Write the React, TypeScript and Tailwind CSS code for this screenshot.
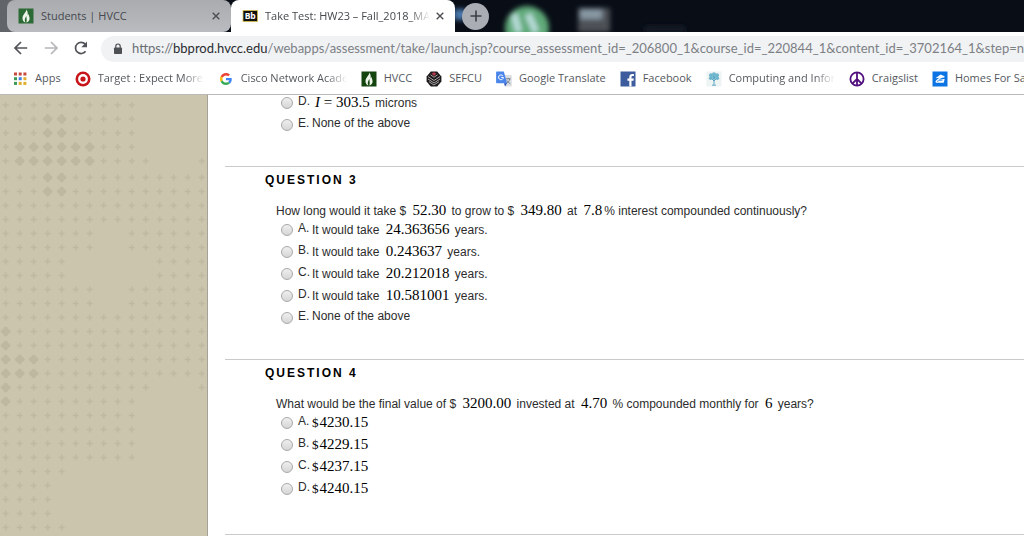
import type { ReactNode } from 'react';

/* ---------- small drawings ---------- */

function FlameIcon({ color = '#1f5c24' }: { color?: string }) {
  return (
    <svg viewBox="0 0 16 16" className="size-4 shrink-0">
      <rect x="0.5" y="0.5" width="15" height="15" fill={color} />
      <path d="M8.4 1.6c.4 2.200-3.900 5-3.900 8.600 0 2.200 1.200 3.700 2.900 4.300-1.300-2.300-.4-4.600 1.100-6.400-.3 2.400.9 3.900-.2 6.500 2-.5 3.300-2.100 3.300-4.100 0-1.700-.9-2.900-1-4.400-.5.400-.8.900-.9 1.500C9.900 5.200 9.600 3 8.400 1.600z" fill="#eef5ea" />
    </svg>
  );
}

function BbIcon() {
  return (
    <svg viewBox="0 0 16 16" className="size-4 shrink-0">
      <rect x="1" y="2.500" width="14.500" height="11" fill="#111" stroke="#d9c04a" strokeWidth="0.800" />
      <text x="8.200" y="11.200" fontSize="8.500" fontWeight="700" textAnchor="middle" fill="#fff" fontFamily="Open Sans, sans-serif">Bb</text>
    </svg>
  );
}

function CloseIcon() {
  return (
    <svg viewBox="0 0 8 8" className="size-2">
      <path d="M.7.7l6.600 6.600M7.300.7L.7 7.300" stroke="#4b4e52" strokeWidth="1.400" />
    </svg>
  );
}

function AppsIcon() {
  const colors = ['#c94a3c', '#c94a3c', '#c94a3c', '#3c9a55', '#3f7fe0', '#e0ae2b', '#3c9a55', '#e0ae2b', '#e0ae2b'];
  return (
    <svg viewBox="0 0 16 16" className="size-4 shrink-0">
      {colors.map((c, i) => (
        <rect key={i} x={2 + (i % 3) * 4.700} y={1.500 + Math.floor(i / 3) * 4.700} width="3" height="3" fill={c} />
      ))}
    </svg>
  );
}

function TargetIcon() {
  return (
    <svg viewBox="0 0 16 16" className="size-4 shrink-0">
      <circle cx="8" cy="8" r="7.500" fill="#c8151b" />
      <circle cx="8" cy="8" r="4.900" fill="#fff" />
      <circle cx="8" cy="8" r="2.600" fill="#c8151b" />
    </svg>
  );
}

function GoogleIcon() {
  return (
    <svg viewBox="0 0 48 48" className="size-4 shrink-0 p-[2px]">
      <path fill="#EA4335" d="M24 9.500c3.540 0 6.710 1.220 9.210 3.600l6.850-6.850C35.900 2.380 30.470 0 24 0 14.620 0 6.510 5.380 2.560 13.220l7.980 6.190C12.430 13.720 17.740 9.500 24 9.500z" />
      <path fill="#4285F4" d="M46.980 24.550c0-1.570-.15-3.090-.38-4.550H24v9.020h12.940c-.58 2.960-2.260 5.480-4.780 7.180l7.730 6c4.510-4.180 7.090-10.360 7.090-17.650z" />
      <path fill="#FBBC05" d="M10.530 28.590c-.48-1.450-.76-2.990-.76-4.590s.27-3.140.76-4.590l-7.980-6.190C.92 16.460 0 20.120 0 24c0 3.880.92 7.540 2.560 10.780l7.970-6.190z" />
      <path fill="#34A853" d="M24 48c6.480 0 11.930-2.130 15.890-5.810l-7.730-6c-2.150 1.450-4.920 2.300-8.160 2.300-6.260 0-11.570-4.220-13.470-9.910l-7.980 6.190C6.510 42.620 14.620 48 24 48z" />
    </svg>
  );
}

function SefcuIcon() {
  return (
    <svg viewBox="0 0 16 16" className="size-4 shrink-0">
      <path d="M4.800.6h6.400l4.200 4.800v5l-4.200 5H4.800l-4.200-5v-5z" fill="#1d1a1c" />
      <path d="M2 5.500l6 4 6-4M2 8l6 4 6-4M3 10.700l5 3.300 5-3.300M4.500 3.800L8 6.300l3.500-2.500" fill="none" stroke="#b9b3b5" strokeWidth="0.900" />
      <path d="M5.500 2.500L8 1.300l2.500 1.200L8 5z" fill="#b03a4a" />
    </svg>
  );
}

function TranslateIcon() {
  return (
    <svg viewBox="0 0 16 16" className="size-4 shrink-0">
      <path d="M6 4h9a.8.8 0 0 1 .8.800v10a.8.800 0 0 1-.8.800H9z" fill="#dcdfe3" />
      <path d="M9.800 7.800h4.800M12.200 6.800v1M13.800 7.800c-.5 2.300-1.900 3.900-3.400 4.800M10.800 9.400c.8 1.500 2 2.500 3.500 3.300" fill="none" stroke="#6d7a88" strokeWidth="0.900" />
      <path d="M.9.4h6.900l3.300 11.900H.9a.8.800 0 0 1-.8-.8V1.200A.8.800 0 0 1 .9.400z" fill="#4b86ea" />
      <path d="M8 12.300h3.100L9 15.500z" fill="#2f55c0" />
      <path d="M6.800 4.700a2.400 2.400 0 1 0 .6 1.700H5.200" fill="none" stroke="#fff" strokeWidth="1" />
    </svg>
  );
}

function FacebookIcon() {
  return (
    <svg viewBox="0 0 16 16" className="size-4 shrink-0">
      <rect x="0.500" y="0.500" width="15" height="15" fill="#3d5c9e" />
      <path d="M9.300 15.500V9.800H7.400V7.600h1.900V6c0-2 1.200-3 3-3 .8 0 1.300.1 1.600.1v2h-1.200c-.9 0-1.200.5-1.200 1.200v1.300h2.300l-.3 2.200h-2v5.700z" fill="#fff" />
    </svg>
  );
}

function TreeIcon() {
  return (
    <svg viewBox="0 0 16 16" className="size-4 shrink-0">
      <rect x="0.500" y="0.500" width="15" height="15" fill="#eef3f4" />
      <g fill="#6fb6cd">
        <circle cx="8" cy="3.200" r="1.900" />
        <circle cx="5" cy="4.300" r="2" />
        <circle cx="11" cy="4.300" r="2" />
        <circle cx="4.600" cy="7.200" r="1.700" />
        <circle cx="11.400" cy="7.200" r="1.700" />
        <circle cx="8" cy="6.500" r="2" />
      </g>
      <path d="M8 5v9M8 10L5.500 7.500M8 10l2.500-2.500M6 14.200h4" fill="none" stroke="#4f9fbb" strokeWidth="0.900" />
    </svg>
  );
}

function PeaceIcon() {
  return (
    <svg viewBox="0 0 16 16" className="size-4 shrink-0">
      <circle cx="8" cy="8" r="6.600" fill="#fff" stroke="#52107f" strokeWidth="1.800" />
      <path d="M8 1.500v13M8 8l-4.600 4.600M8 8l4.600 4.600" stroke="#52107f" strokeWidth="1.800" />
    </svg>
  );
}

function ZillowIcon() {
  return (
    <svg viewBox="0 0 16 16" className="size-4 shrink-0">
      <rect x="0.500" y="0.500" width="15" height="15" fill="#0d74e4" />
      <path d="M3.400 7.200L8.600 3.600l4 1.600-.3 1.300C9.800 6.700 8.200 7.600 6.700 9c2-.8 3.900-1.100 6-1.100l-1 3.800H4l-.6-1.200C4.600 8.700 6 7.600 7.700 6.700 6.200 6.800 4.800 7 3.400 7.200z" fill="#fff" />
      <path d="M5 10.400c1.800-.9 3.500-1.300 5.500-1.200" fill="none" stroke="#0d74e4" strokeWidth="0.800" />
    </svg>
  );
}

/* ---------- browser chrome ---------- */

function FadedText({ children, fade, className = '' }: { children: string; fade?: boolean; className?: string }) {
  return (
    <span
      className={`overflow-hidden whitespace-nowrap ${
        fade ? '[mask-image:linear-gradient(to_right,#000_calc(100%-20px),transparent)]' : ''
      } ${className}`}
    >
      {children}
    </span>
  );
}

function Tab({ icon, title, active }: { icon: ReactNode; title: string; active?: boolean }) {
  return (
    <div
      className={`flex h-8 w-56 shrink-0 items-center rounded-t-lg pr-[7px] pl-[11px] ${
        active ? 'bg-white' : 'rounded-b-lg bg-linear-to-b from-[#a9abae] to-[#b9bbc0]'
      }`}
    >
      {icon}
      <FadedText fade={active} className="ml-[7px] flex-1 text-[11px] text-[#45494d]">{title}</FadedText>
      <button aria-label="Close tab" className="ml-[2px] flex size-4 shrink-0 items-center justify-center">
        <CloseIcon />
      </button>
    </div>
  );
}

function TabStrip() {
  return (
    <div className="relative h-8 overflow-hidden bg-[#080d16]">
      <svg className="absolute inset-0 h-8 w-full" aria-hidden="true">
        <defs>
          <filter id="soft" x="-50%" y="-50%" width="200%" height="200%"><feGaussianBlur stdDeviation="2.500" /></filter>
        </defs>
        <rect x="0" y="0" width="200" height="32" fill="#616468" />
        <g filter="url(#soft)">
          <rect x="454" y="9" width="12" height="11" fill="#4a78ad" />
          <circle cx="527" cy="28" r="22" fill="#5fa978" />
          <path d="M514 14l5 18M528 14l8 18" stroke="#b7dbd8" strokeWidth="7" />
          <rect x="578" y="8" width="32" height="24" fill="#4e5156" />
          <rect x="580" y="9" width="22" height="10" fill="#8797a3" />
          <rect x="645" y="26" width="40" height="6" fill="#151b25" />
        </g>
      </svg>
      <div className="relative flex h-8 items-center pl-[7px]">
        <Tab icon={<FlameIcon color="#2c6a35" />} title="Students | HVCC" />
        <Tab icon={<BbIcon />} title="Take Test: HW23 – Fall_2018_MA" active />
        <button aria-label="New tab" className="ml-[7px] flex size-[27px] items-center justify-center rounded-full bg-[#aaadb3]">
          <svg viewBox="0 0 12 12" className="size-3">
            <path d="M6 .5v11M.5 6h11" stroke="#3c3f43" strokeWidth="1.600" />
          </svg>
        </button>
      </div>
    </div>
  );
}

function Toolbar() {
  return (
    <div className="flex h-8 items-center pl-[13px]">
      <button aria-label="Back" className="mr-[14px] size-4">
        <svg viewBox="0 0 16 16"><path d="M14.200 8H2M8 2L2 8l6 6" fill="none" stroke="#505357" strokeWidth="1.700" /></svg>
      </button>
      <button aria-label="Forward" className="mr-[14px] size-4">
        <svg viewBox="0 0 16 16"><path d="M1.800 8H14M8 2l6 6-6 6" fill="none" stroke="#b4b6b9" strokeWidth="1.700" /></svg>
      </button>
      <button aria-label="Reload" className="mr-[12px] size-4">
        <svg viewBox="0 0 16 16">
          <path d="M12.600 11.300A5.600 5.600 0 1 1 12.300 4.200" fill="none" stroke="#505357" strokeWidth="1.700" />
          <path d="M14 1.500v5.700H8.300z" fill="#505357" />
        </svg>
      </button>
      <div className="mt-[2px] flex h-[26px] min-w-0 flex-1 items-center overflow-hidden rounded-l-full bg-[#f0f2f4] pl-3">
        <svg viewBox="0 0 10 12" className="h-3 w-[10px] shrink-0">
          <rect x="1" y="4.500" width="8" height="6.500" rx="0.800" fill="#4d5054" />
          <path d="M2.800 5V3.200a2.200 2.200 0 0 1 4.400 0V5" fill="none" stroke="#4d5054" strokeWidth="1.200" />
        </svg>
        <span className="ml-[9px] font-['Lato','Noto_Sans',sans-serif] text-[13px] whitespace-nowrap text-[#7c8085]">
          <span className="text-[#6b6f74]">https://</span>
          <span className="text-[#2a2d31]">bbprod.hvcc.edu</span>
          /webapps/assessment/take/launch.jsp?course_assessment_id=_206800_1&amp;course_id=_220844_1&amp;content_id=_3702164_1&amp;step=n
        </span>
      </div>
    </div>
  );
}

const bookmarks: { label: string; icon: ReactNode; fade?: boolean }[] = [
  { label: 'Apps', icon: <AppsIcon /> },
  { label: 'Target : Expect More.', icon: <TargetIcon />, fade: true },
  { label: 'Cisco Network Acade', icon: <GoogleIcon />, fade: true },
  { label: 'HVCC', icon: <FlameIcon color="#14450f" /> },
  { label: 'SEFCU', icon: <SefcuIcon /> },
  { label: 'Google Translate', icon: <TranslateIcon /> },
  { label: 'Facebook', icon: <FacebookIcon /> },
  { label: 'Computing and Infor', icon: <TreeIcon />, fade: true },
  { label: 'Craigslist', icon: <PeaceIcon /> },
  { label: 'Homes For Sale', icon: <ZillowIcon /> },
];

function BookmarkBar() {
  return (
    <nav className="flex h-[30px] items-center gap-[14px] overflow-hidden pb-px pl-3">
      {bookmarks.map((b) => (
        <a key={b.label} href="#" className="flex shrink-0 items-center gap-[7px] text-[11px] text-[#55595e]">
          {b.icon}
          <FadedText fade={b.fade} className={b.fade ? 'w-[106px]' : ''}>{b.label}</FadedText>
        </a>
      ))}
    </nav>
  );
}

/* ---------- patterned side panel ---------- */

// One string per row: "." small mark, "O" large mark, space for none.
const pattern: string[] = [
  '..........',
  '...OO.....',
  '...OO.....',
  '.OOOOOO...',
  '.OOOOOO....   .',
  '...OO..........',
  '...OO..........',
  '...............',
  '...............',
  '.......  ......',
  '.......  ......',
  '.....      ....',
  '.....      ....',
  '.......  ......',
  '.......  ......',
  '...............',
  'O..............',
  'O..............',
  'OOO............',
  'OOO............',
  'O..........   .',
  'O.........',
  '..........',
  '..........',
  '..........',
  '..........',
  '.....',
  '....',
  '....',
  '....',
  '.....',
];

function SidePattern() {
  return (
    <svg width="207" height="441" className="block" aria-hidden="true">
      {pattern.flatMap((row, r) =>
        row.split('').map((mark, c) => {
          if (mark === ' ') return null;
          const x = 5.700 + c * 14;
          const y = 10 + r * 14 + (r > 4 ? 2.500 : 0);
          return mark === 'O' ? (
            <path key={`${r}-${c}`} d={`M${x} ${y - 5}l1.800 1 .6 1.600 1.600.6 1 1.800-1 1.800-1.600.6-.6 1.600-1.800 1-1.800-1-.6-1.600-1.600-.6-1-1.800 1-1.800 1.600-.6.6-1.600z`} fill="#bfb8a0" />
          ) : (
            <path key={`${r}-${c}`} d={`M${x - 3} ${y}h6M${x} ${y - 3}v6`} stroke="#c0b9a1" strokeWidth="1.600" />
          );
        }),
      )}
    </svg>
  );
}

/* ---------- test content ---------- */

function M({ children, flush }: { children: ReactNode; flush?: boolean }) {
  return (
    <span className={`font-['Liberation_Serif',serif] text-[15px] leading-none text-black ${flush ? '' : 'mr-[2px] ml-[3px]'}`}>
      {children}
    </span>
  );
}

function Dollars({ amount }: { amount: string }) {
  return (
    <M flush>
      <span className="mr-px text-[13px]">$</span>
      {amount}
    </M>
  );
}

function Option({ name, letter, plain, children }: { name: string; letter: string; plain?: boolean; children: ReactNode }) {
  return (
    <label className="flex h-[22px] items-center whitespace-nowrap">
      <input
        type="radio"
        name={name}
        className="size-3 shrink-0 appearance-none rounded-full border border-[#a9a9a9] bg-linear-to-b from-[#efefef] to-[#d6d6d6]"
      />
      <span className="ml-[5px] w-[14px] shrink-0 pb-1">{letter}.</span>
      <span className={plain ? 'pb-1' : ''}>{children}</span>
    </label>
  );
}

function Question({ number, prompt, last, children }: { number: number; prompt: ReactNode; last?: boolean; children: ReactNode }) {
  return (
    <section className={`border-t border-[#cacaca] pt-[3px] ${last ? 'pb-[34px]' : 'pb-[30px]'}`}>
      <h3 className="pl-10 leading-5 font-bold tracking-[2px] text-black">QUESTION {number}</h3>
      <p className="mt-[13px] flex h-4 items-center pl-[51px] whitespace-nowrap"><span>{prompt}</span></p>
      <div className="pl-14">{children}</div>
    </section>
  );
}

export default function App() {
  return (
    <div className="flex min-h-screen flex-col overflow-hidden bg-white">
      <header className="border-b border-[#b9b9b9] font-['Open_Sans','Noto_Sans',sans-serif]">
        <TabStrip />
        <Toolbar />
        <BookmarkBar />
      </header>
      <div className="flex flex-1 overflow-hidden">
        <aside className="shrink-0 border-r border-[#a5a397] bg-[#cbc5ad]">
          <SidePattern />
        </aside>
        <main className="min-w-0 flex-1 pl-[17px] font-['Liberation_Sans',Arial,sans-serif] text-[12px] text-[#2c2c2c]">
          <div className="-mt-[3px] pb-[30px] pl-14">
            <Option name="q2" letter="D"><M><i>I</i> = 303.5</M> microns</Option>
            <Option name="q2" letter="E" plain>None of the above</Option>
          </div>
          <Question
            number={3}
            prompt={<>How long would it take $ <M>52.30</M> to grow to $ <M>349.80</M> at <M>7.8</M>% interest compounded continuously?</>}
          >
            <Option name="q3" letter="A">It would take <M>24.363656</M> years.</Option>
            <Option name="q3" letter="B">It would take <M>0.243637</M> years.</Option>
            <Option name="q3" letter="C">It would take <M>20.212018</M> years.</Option>
            <Option name="q3" letter="D">It would take <M>10.581001</M> years.</Option>
            <Option name="q3" letter="E" plain>None of the above</Option>
          </Question>
          <Question
            number={4}
            last
            prompt={<>What would be the final value of $ <M>3200.00</M> invested at <M>4.70</M> % compounded monthly for <M>6</M> years?</>}
          >
            <Option name="q4" letter="A"><Dollars amount="4230.15" /></Option>
            <Option name="q4" letter="B"><Dollars amount="4229.15" /></Option>
            <Option name="q4" letter="C"><Dollars amount="4237.15" /></Option>
            <Option name="q4" letter="D"><Dollars amount="4240.15" /></Option>
          </Question>
          <hr className="border-[#cacaca]" />
        </main>
      </div>
    </div>
  );
}
